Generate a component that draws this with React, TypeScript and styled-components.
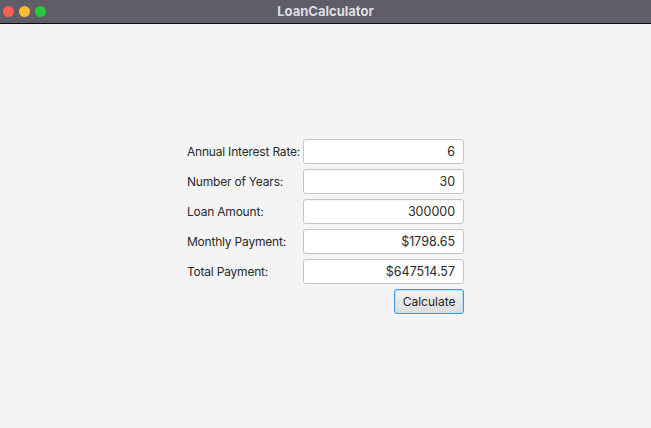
import { Fragment } from "react";
import styled, { createGlobalStyle } from "styled-components";

const GlobalStyle = createGlobalStyle`
  html, body {
    margin: 0;
    padding: 0;
    height: 100%;
  }
  body {
    background: #f4f4f4;
    font-family: "Inter", "Liberation Sans", sans-serif;
  }
  #root {
    height: 100%;
  }
`;

const Window = styled.div`
  width: 651px;
  height: 428px;
  display: flex;
  flex-direction: column;
  background: #f4f4f4;
`;

const TitleBar = styled.div`
  flex: none;
  display: flex;
  align-items: center;
  position: relative;
  background: #5f5d67;
  border-bottom: 1px solid #0c0c0c;
  box-sizing: border-box;
  height: 24px;
`;

const Lights = styled.div`
  display: flex;
  gap: 5px;
  padding-left: 3px;
  padding-bottom: 1px;
`;

const Light = styled.span<{ $color: string }>`
  width: 11px;
  height: 11px;
  border-radius: 50%;
  background: ${(p) => p.$color};
`;

const Title = styled.div`
  position: absolute;
  left: 0;
  right: 0;
  top: 0;
  bottom: 1px;
  display: flex;
  align-items: center;
  justify-content: center;
  color: #dedde2;
  font-weight: 700;
  font-size: 13px;
  pointer-events: none;
`;

const Content = styled.div`
  flex: 1;
  display: flex;
  align-items: center;
  justify-content: center;
`;

const Form = styled.div`
  display: grid;
  grid-template-columns: auto 161px;
  column-gap: 3px;
  row-gap: 5px;
  align-items: center;
`;

const Label = styled.label`
  font-size: 12px;
  color: #2a2a2a;
  letter-spacing: -0.2px;
`;

const Field = styled.input`
  box-sizing: border-box;
  width: 161px;
  height: 25px;
  border: 1px solid #c6c6c6;
  border-radius: 3px;
  background: #ffffff;
  text-align: right;
  padding: 0 8px;
  font-family: inherit;
  font-size: 12.5px;
  color: #2a2a2a;
  box-shadow: inset 0 1px 1px rgba(0, 0, 0, 0.04);
  outline: none;
`;

const ButtonCell = styled.div`
  grid-column: 2;
  display: flex;
  justify-content: flex-end;
`;

const Button = styled.button`
  box-sizing: border-box;
  width: 70px;
  height: 25px;
  border: 1px solid #3d9ad6;
  border-radius: 3px;
  background: linear-gradient(#f4f4f4, #dcdcdc);
  box-shadow: inset 0 0 0 1px #bfe0f4;
  font-family: inherit;
  font-size: 12px;
  color: #262626;
  padding: 0;
`;

const rows = [
  { label: "Annual Interest Rate:", value: "6" },
  { label: "Number of Years:", value: "30" },
  { label: "Loan Amount:", value: "300000" },
  { label: "Monthly Payment:", value: "$1798.65" },
  { label: "Total Payment:", value: "$647514.57" },
];

export default function App() {
  return (
    <>
      <GlobalStyle />
      <Window>
        <TitleBar>
          <Lights>
            <Light $color="#fe5f57" />
            <Light $color="#febc2e" />
            <Light $color="#28c840" />
          </Lights>
          <Title>LoanCalculator</Title>
        </TitleBar>
        <Content>
          <Form>
            {rows.map((r) => (
              <Fragment key={r.label}>
                <Label>{r.label}</Label>
                <Field defaultValue={r.value} readOnly />
              </Fragment>
            ))}
            <ButtonCell>
              <Button>Calculate</Button>
            </ButtonCell>
          </Form>
        </Content>
      </Window>
    </>
  );
}
